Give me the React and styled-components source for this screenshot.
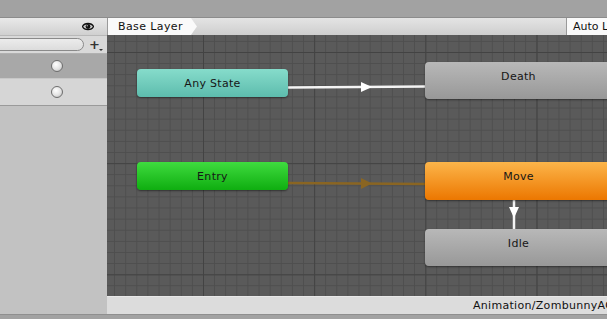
import styled, { createGlobalStyle } from "styled-components";

const GlobalStyle = createGlobalStyle`
  html, body {
    margin: 0;
    padding: 0;
    background: #a2a2a2;
    font-family: "DejaVu Sans", Verdana, sans-serif;
  }
`;

// node boxes on the graph canvas; lift moves the label up from centre
const states = [
  { name: "Any State", x: 30, y: 34, w: 151, h: 28, kind: "any", lift: 0 },
  { name: "Entry", x: 30, y: 127, w: 151, h: 28, kind: "entry", lift: -1 },
  { name: "Death", x: 318, y: 27, w: 187, h: 37, kind: "plain", lift: 8 },
  { name: "Move", x: 318, y: 127, w: 187, h: 38, kind: "default", lift: 9 },
  { name: "Idle", x: 318, y: 194, w: 187, h: 37, kind: "plain", lift: 8 },
];

const fills = {
  any: "linear-gradient(#86dccb, #5dbcad)",
  entry: "linear-gradient(#3fdb3f, #0fae10)",
  plain: "linear-gradient(#b8b8b8, #989898)",
  default: "linear-gradient(#fcb54a, #ec7700)",
};

const Window = styled.div`
  width: 607px;
  height: 319px;
  display: flex;
  flex-direction: column;
  overflow: hidden;
`;

const TopStrip = styled.div`
  height: 17px;
  flex: none;
  background: #a2a2a2;
  border-bottom: 1px solid #8c8c8c;
`;

const Main = styled.div`
  height: 296px;
  flex: none;
  display: flex;
`;

const BottomStrip = styled.div`
  flex: 1;
  background: #a2a2a2;
  border-top: 1px solid #8f8f8f;
`;

const LeftPanel = styled.div`
  width: 107px;
  flex: none;
  display: flex;
  flex-direction: column;
  background: #c2c2c2;
`;

const PanelHeader = styled.div`
  height: 17px;
  display: flex;
  align-items: center;
  justify-content: flex-end;
  padding-right: 13px;
  background: linear-gradient(#e9e9e9, #d0d0d0);
  border-bottom: 1px solid #b8b8b8;
`;

const SearchRow = styled.div`
  height: 17px;
  display: flex;
  align-items: center;
  gap: 5px;
  background: #d9d9d9;
  border-bottom: 1px solid #b0b0b0;
  overflow: hidden;
`;

const SearchField = styled.div`
  width: 92px;
  height: 11px;
  margin-left: -10px;
  flex: none;
  border: 1px solid #8a8a8a;
  border-radius: 7px;
  background: linear-gradient(#ececec, #dcdcdc);
`;

const AddButton = styled.div`
  position: relative;
  font-size: 13px;
  font-weight: bold;
  line-height: 13px;
  color: #333;
  &::after {
    content: "";
    position: absolute;
    right: -3px;
    bottom: 0;
    border-left: 2px solid transparent;
    border-right: 2px solid transparent;
    border-top: 2px solid #333;
  }
`;

const LayerRow = styled.div`
  height: ${(p) => p.$h}px;
  display: flex;
  align-items: center;
  padding-left: 51px;
  background: ${(p) => (p.$selected ? "#a8a8a8" : "#d6d6d6")};
  border-bottom: 1px solid ${(p) => (p.$selected ? "#c8c8c8" : "#9a9a9a")};
`;

const Radio = styled.div`
  width: 10px;
  height: 10px;
  border-radius: 50%;
  border: 1px solid #6e6e6e;
  background: radial-gradient(circle at 40% 35%, #ffffff, #e2e2e2 55%, #b0b0b0);
`;

const GraphColumn = styled.div`
  flex: 1;
  display: flex;
  flex-direction: column;
  min-width: 0;
`;

const Toolbar = styled.div`
  height: 17px;
  flex: none;
  display: flex;
  justify-content: space-between;
  background: linear-gradient(#e4e4e4, #cecece);
  border-left: 1px solid #9a9a9a;
`;

const Crumb = styled.div`
  display: flex;
  align-items: center;
  height: 17px;
  padding: 0 14px 0 10px;
  background: #fafafa;
  font-size: 11px;
  letter-spacing: 0.4px;
  color: #111;
  clip-path: polygon(0 0, calc(100% - 6px) 0, 100% 50%, calc(100% - 6px) 100%, 0 100%);
`;

const LiveTab = styled.div`
  display: flex;
  align-items: center;
  width: 34px;
  height: 17px;
  padding-left: 6px;
  background: #fafafa;
  border-left: 1px solid #9a9a9a;
  font-size: 11px;
  white-space: nowrap;
  overflow: hidden;
  color: #111;
`;

const Graph = styled.div`
  position: relative;
  flex: 1;
  overflow: hidden;
  background-color: #5a5a5a;
  background-image:
    linear-gradient(to right, #434343 1px, transparent 1px),
    linear-gradient(to bottom, #434343 1px, transparent 1px),
    linear-gradient(to right, #4e4e4e 1px, transparent 1px),
    linear-gradient(to bottom, #4e4e4e 1px, transparent 1px);
  background-size: 111.2px 111.2px, 111.2px 111.2px, 11.12px 11.12px, 11.12px 11.12px;
  background-position: 96px 17px, 96px 17px, 96px 17px, 96px 17px;
`;

const StateNode = styled.div`
  position: absolute;
  display: flex;
  align-items: center;
  justify-content: center;
  box-sizing: border-box;
  border-radius: 4px;
  background: ${(p) => fills[p.$kind]};
  box-shadow: 0 1px 2px rgba(0, 0, 0, 0.45);
  font-size: 11px;
  letter-spacing: 0.3px;
  color: #161616;
  padding-bottom: ${(p) => Math.max(p.$lift, 0)}px;
  padding-top: ${(p) => Math.max(-p.$lift, 0)}px;
`;

const Links = styled.svg`
  position: absolute;
  left: 0;
  top: 0;
`;

const StatusBar = styled.div`
  height: 17px;
  flex: none;
  display: flex;
  align-items: center;
  padding-left: 366px;
  background: #dcdcdc;
  border-top: 1px solid #e8e8e8;
  font-size: 11px;
  letter-spacing: 0.3px;
  white-space: nowrap;
  overflow: hidden;
  color: #111;
`;

const EyeIcon = () => (
  <svg width="12" height="9" viewBox="0 0 12 9">
    <path d="M0.5 4.5 C2.5 0.5 9.5 0.5 11.5 4.5 C9.5 8.5 2.5 8.5 0.5 4.5 Z" fill="#cfcfcf" stroke="#111" strokeWidth="1.3" />
    <circle cx="6" cy="4.5" r="2.4" fill="#111" />
    <circle cx="5.2" cy="3.7" r="0.7" fill="#bbb" />
  </svg>
);

export default function App() {
  return (
    <>
      <GlobalStyle />
      <Window>
        <TopStrip />
        <Main>
          <LeftPanel>
            <PanelHeader>
              <EyeIcon />
            </PanelHeader>
            <SearchRow>
              <SearchField />
              <AddButton>+</AddButton>
            </SearchRow>
            <LayerRow $selected $h={24}>
              <Radio />
            </LayerRow>
            <LayerRow $h={26}>
              <Radio />
            </LayerRow>
          </LeftPanel>
          <GraphColumn>
            <Toolbar>
              <Crumb>Base Layer</Crumb>
              <LiveTab>Auto Live Link</LiveTab>
            </Toolbar>
            <Graph>
              <Links width="500" height="262">
                <line x1="181" y1="52.5" x2="318" y2="51.5" stroke="#f4f4f4" strokeWidth="2.5" />
                <polygon points="254,47 265,52 254,57" fill="#ffffff" />
                <line x1="181" y1="148" x2="318" y2="149" stroke="#8a6522" strokeWidth="2.5" />
                <polygon points="254,143 265,148.5 254,154" fill="#8a6522" />
                <line x1="407" y1="165" x2="407" y2="194" stroke="#f4f4f4" strokeWidth="2.5" />
                <polygon points="402,172 407,183 412,172" fill="#ffffff" />
              </Links>
              {states.map((s) => (
                <StateNode
                  key={s.name}
                  $kind={s.kind}
                  $lift={s.lift}
                  style={{ left: s.x, top: s.y, width: s.w, height: s.h }}
                >
                  {s.name}
                </StateNode>
              ))}
            </Graph>
            <StatusBar>Animation/ZombunnyAC.controller</StatusBar>
          </GraphColumn>
        </Main>
        <BottomStrip />
      </Window>
    </>
  );
}
